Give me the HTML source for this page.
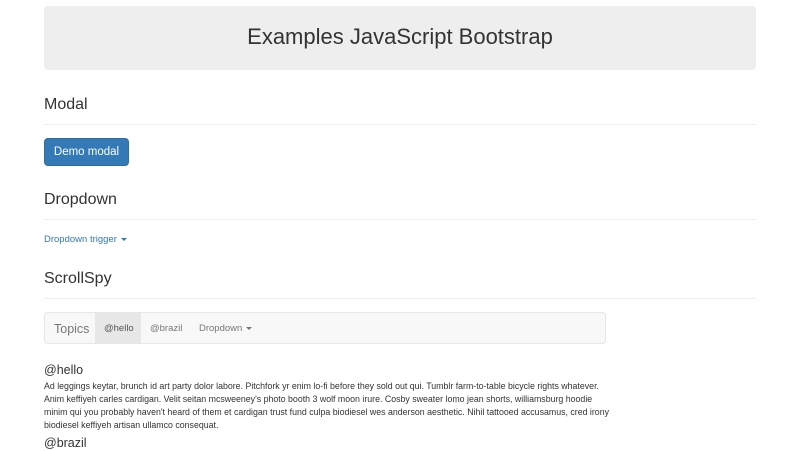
<!DOCTYPE html>
<html><head><style>
body{margin:0;width:800px;height:450px;overflow:hidden;background:#fff;font-family:"Liberation Sans",sans-serif;color:#333;position:relative}
.a{position:absolute;white-space:nowrap}
.hr{position:absolute;left:44px;width:712px;height:1px;background:#eee}
</style></head><body>
<div class="a" style="left:44px;top:6px;width:712px;height:64px;background:#eee;border-radius:4px"></div>
<div class="a" style="left:44px;width:712px;top:23px;text-align:center;font-size:22px;line-height:28px">Examples JavaScript Bootstrap</div>

<div class="a" style="left:44px;top:95px;font-size:16px;line-height:20px">Modal</div>
<div class="hr" style="top:124px"></div>
<div class="a" style="left:44px;top:138px;width:85px;height:28px;background:#337ab7;border:1px solid #2e6da4;box-sizing:border-box;border-radius:4px;color:#fff;font-size:11.5px;line-height:27px;text-align:center">Demo modal</div>

<div class="a" style="left:44px;top:190px;font-size:16px;line-height:20px">Dropdown</div>
<div class="hr" style="top:219px"></div>
<div class="a" style="left:44px;top:234px;font-size:9.5px;line-height:12px;color:#337ab7">Dropdown trigger <span style="display:inline-block;border-top:3px solid #337ab7;border-left:3px solid transparent;border-right:3px solid transparent;vertical-align:middle;margin-left:1px"></span></div>

<div class="a" style="left:44px;top:269px;font-size:16px;line-height:20px">ScrollSpy</div>
<div class="hr" style="top:298px"></div>

<div class="a" style="left:44px;top:312px;width:562px;height:32px;background:#f8f8f8;border:1px solid #e7e7e7;box-sizing:border-box;border-radius:4px"></div>
<div class="a" style="left:95px;top:313px;width:46px;height:30px;background:#e7e7e7"></div>
<div class="a" style="left:54px;top:321px;font-size:12.5px;line-height:16px;color:#777">Topics</div>
<div class="a" style="left:104px;top:323px;font-size:9.5px;line-height:12px;color:#555">@hello</div>
<div class="a" style="left:150px;top:323px;font-size:9.5px;line-height:12px;color:#777">@brazil</div>
<div class="a" style="left:199px;top:323px;font-size:9.5px;line-height:12px;color:#777">Dropdown <span style="display:inline-block;border-top:3px solid #777;border-left:3px solid transparent;border-right:3px solid transparent;vertical-align:middle;margin-left:1px"></span></div>

<div class="a" style="left:44px;top:362px;font-size:12.5px;line-height:16px">@hello</div>
<div class="a" style="left:44px;top:380px;font-size:8.8px;line-height:13px">Ad leggings keytar, brunch id art party dolor labore. Pitchfork yr enim lo-fi before they sold out qui. Tumblr farm-to-table bicycle rights whatever.<br>Anim keffiyeh carles cardigan. Velit seitan mcsweeney's photo booth 3 wolf moon irure. Cosby sweater lomo jean shorts, williamsburg hoodie<br>minim qui you probably haven't heard of them et cardigan trust fund culpa biodiesel wes anderson aesthetic. Nihil tattooed accusamus, cred irony<br>biodiesel keffiyeh artisan ullamco consequat.</div>
<div class="a" style="left:44px;top:435px;font-size:12.5px;line-height:16px">@brazil</div>
</body></html>
